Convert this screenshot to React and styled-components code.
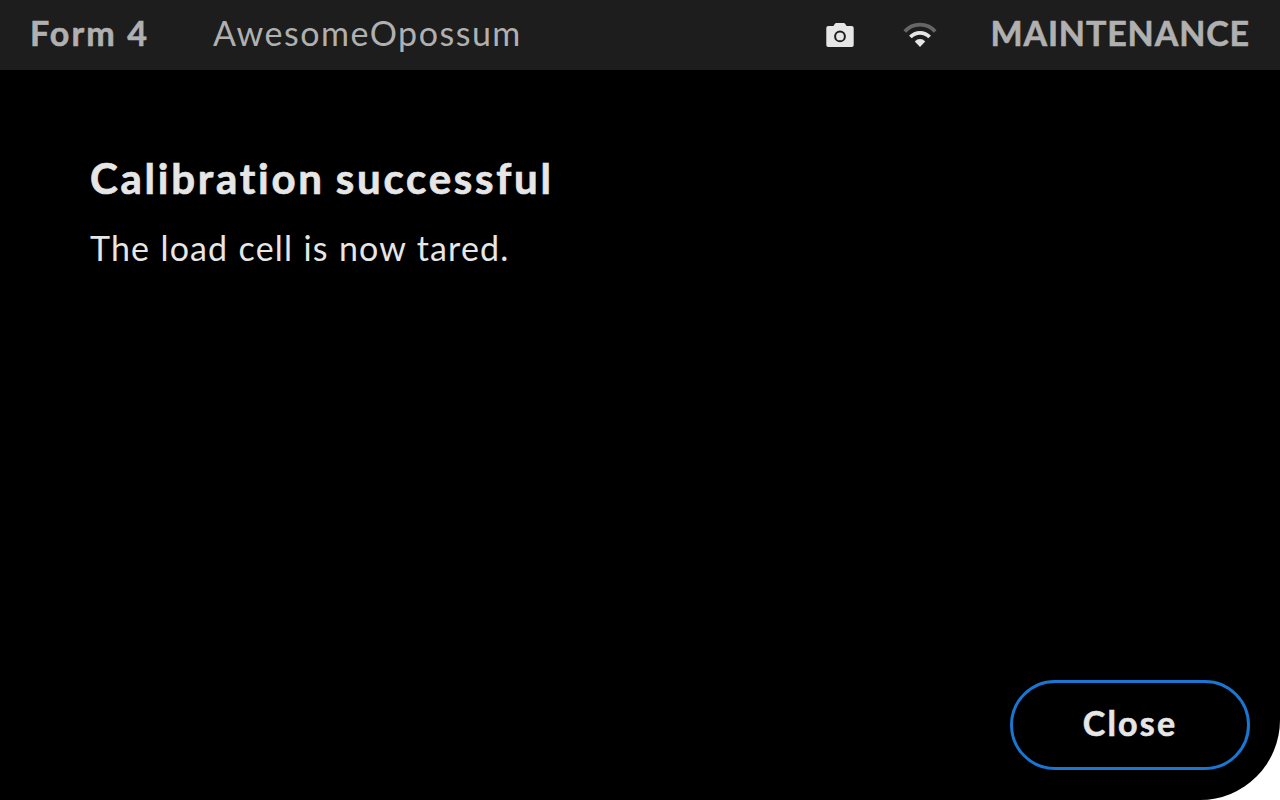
import React from 'react';
import styled, { createGlobalStyle, ThemeProvider } from 'styled-components';

const theme = {
  background: '#000000',
  bar: '#1d1d1d',
  muted: '#b0b0b0',
  text: '#e6e6e6',
  accent: '#1976d2'
};

const GlobalStyle = createGlobalStyle`
  body {
    margin: 0;
    background: #ffffff;
  }
`;

const Screen = styled.div`
  display: flex;
  flex-direction: column;
  box-sizing: border-box;
  width: 1280px;
  height: 800px;
  overflow: hidden;
  border-bottom-right-radius: 80px;
  background: ${props => props.theme.background};
  color: ${props => props.theme.text};
  font-family: Lato, "Open Sans", sans-serif;
  font-size: 34px;
  line-height: 41px;
`;

const StatusBar = styled.header`
  display: flex;
  align-items: center;
  box-sizing: border-box;
  height: 70px;
  padding: 0 30px;
  background: ${props => props.theme.bar};
  color: ${props => props.theme.muted};
`;

const StatusText = styled.span`
  padding-bottom: 5px;
  font-weight: ${props => props.$bold ? 700 : 400};
  letter-spacing: ${props => props.$spacing};
  white-space: nowrap;
  -webkit-text-stroke: ${props => props.$bold ? '0.6px' : '0'};
`;

const PrinterName = styled(StatusText)`
  flex: 1;
  margin-left: 64px;
`;

const StatusIcons = styled.div`
  display: flex;
  gap: 40px;
  margin-right: 50px;

  svg {
    display: block;
    width: 40px;
    height: 40px;
  }
`;

const Content = styled.main`
  flex: 1;
  padding: 83px 90px 0;
`;

const Title = styled.h1`
  margin: 0 0 24px;
  font-size: 42px;
  line-height: 50px;
  font-weight: 700;
  letter-spacing: 2.75px;
  word-spacing: -2px;
  -webkit-text-stroke: 0.7px;
`;

const Message = styled.p`
  margin: 0;
  letter-spacing: 1.14px;
  word-spacing: 0.5px;
`;

const Footer = styled.footer`
  display: flex;
  justify-content: flex-end;
  padding: 0 30px 30px;
`;

const Button = styled.button`
  box-sizing: border-box;
  width: 240px;
  height: 90px;
  padding: 0 0 5px;
  border: 3px solid ${props => props.theme.accent};
  border-radius: 45px;
  background: transparent;
  color: inherit;
  font: inherit;
  font-weight: 700;
  letter-spacing: 2.2px;
  -webkit-text-stroke: 0.6px;
`;

const CameraIcon = () => (
  <svg viewBox='0 0 40 40'>
    <path
      fill='#e6e6e6'
      d='M8.3 11h5.1l1.5-2.3q.5-.7 1.4-.7h7.4q.9 0 1.4.7l1.5 2.3h5.1q2 0 2 2v17q0 2-2 2H8.3q-2 0-2-2V13q0-2 2-2z'
    />
    <circle cx='20' cy='21.4' r='4.9' fill='none' stroke='#1d1d1d' strokeWidth='2' />
  </svg>
);

const WifiIcon = () => (
  <svg viewBox='0 0 40 40' fill='none' strokeWidth='3.7'>
    <path stroke='#666666' d='M4.8 16.4A20.3 20.3 0 0 1 35.2 16.4' />
    <path stroke='#e6e6e6' d='M10.4 22.1A12.9 12.9 0 0 1 29.6 22.1' />
    <path fill='#e6e6e6' d='M14.8 26.4A7 7 0 0 1 25.2 26.4L20 32z' />
  </svg>
);

const App = () => (
  <ThemeProvider theme={theme}>
    <GlobalStyle />
    <Screen>
      <StatusBar>
        <StatusText $bold $spacing='2.1px'>Form 4</StatusText>
        <PrinterName $spacing='1.5px'>AwesomeOpossum</PrinterName>
        <StatusIcons>
          <CameraIcon />
          <WifiIcon />
        </StatusIcons>
        <StatusText $bold $spacing='0.87px'>MAINTENANCE</StatusText>
      </StatusBar>
      <Content>
        <Title>Calibration successful</Title>
        <Message>The load cell is now tared.</Message>
      </Content>
      <Footer>
        <Button>Close</Button>
      </Footer>
    </Screen>
  </ThemeProvider>
);

export default App;
